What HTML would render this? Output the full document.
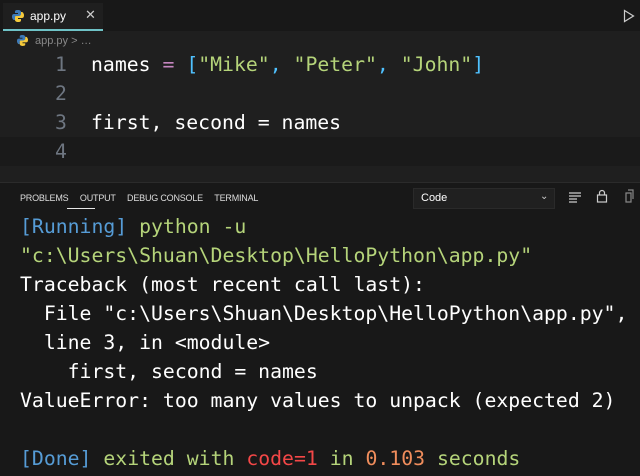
<!DOCTYPE html>
<html><head><meta charset="utf-8"><style>
*{margin:0;padding:0;box-sizing:border-box}
body{width:640px;height:476px;background:#181818;overflow:hidden;position:relative;font-family:"Liberation Sans",sans-serif}
.abs{position:absolute}
.mono{font-family:"DejaVu Sans Mono","Liberation Mono",monospace;font-size:19.8px;white-space:pre}
.code div{height:29px;line-height:29px}
.s{color:#ce9178}
</style></head><body>
<div class="abs" style="left:0;top:0;width:640px;height:3px;background:#181818"></div>
<div class="abs" style="left:0;top:3px;width:640px;height:28px;background:#181818"></div>
<div class="abs" style="left:3px;top:3px;width:100px;height:28px;background:#1f1f1f;border-bottom:2px solid #6fc3c7"></div>
<svg class="abs" style="left:12px;top:10px" width="12" height="12" viewBox="0 0 12 12"><path d="M6 0C3 0 3 1 3 2v1h3v1H2C0 4 0 6 0 7s1 3 2 3h1V8c0-1 1-2 2-2h3c1 0 1-1 1-2V2C9 1 8 0 6 0z" fill="#3d7ab8"/><path d="M6 12c3 0 3-1 3-2V9H6V8h4c2 0 2-2 2-3s-1-3-2-3H9v2c0 1-1 2-2 2H4C3 6 3 7 3 8v2c0 1 1 2 3 2z" fill="#f4c93c"/></svg>
<div class="abs" style="left:30px;top:9px;font-size:12px;color:#fff">app.py</div>
<div class="abs" style="left:85px;top:7px;font-size:13px;color:#ccc">✕</div>
<div class="abs" style="left:0;top:31px;width:640px;height:151px;background:#1f1f1f"></div>
<svg class="abs" style="left:17px;top:35px" width="11" height="11" viewBox="0 0 12 12"><path d="M6 0C3 0 3 1 3 2v1h3v1H2C0 4 0 6 0 7s1 3 2 3h1V8c0-1 1-2 2-2h3c1 0 1-1 1-2V2C9 1 8 0 6 0z" fill="#3d7ab8"/><path d="M6 12c3 0 3-1 3-2V9H6V8h4c2 0 2-2 2-3s-1-3-2-3H9v2c0 1-1 2-2 2H4C3 6 3 7 3 8v2c0 1 1 2 3 2z" fill="#f4c93c"/></svg>
<div class="abs" style="left:35px;top:35px;font-size:11px;color:#888">app.py &gt; …</div>
<svg class="abs" style="left:623px;top:9px" width="12" height="14"><path d="M1.5 1.5L10.5 7L1.5 12.5Z" fill="none" stroke="#ccc" stroke-width="1.2"/></svg>
<div class="abs" style="left:0;top:137px;width:640px;height:29px;background:#1a1a1a"></div>
<div class="abs mono code" style="left:55px;top:50px;color:#6e7681"><div>1</div><div>2</div><div>3</div><div>4</div></div>
<div class="abs mono code" style="left:91px;top:50px;color:#fff"><div>names <span style="color:#c586c0">=</span> <span style="color:#4fc1ff">[</span><span style="color:#b5d47a">"Mike"</span><span style="color:#4fc1ff">,</span> <span style="color:#b5d47a">"Peter"</span><span style="color:#4fc1ff">,</span> <span style="color:#b5d47a">"John"</span><span style="color:#4fc1ff">]</span></div><div> </div><div>first, second = names</div><div> </div></div>
<div class="abs" style="left:0;top:182px;width:640px;height:1px;background:#2b2b2b"></div>
<div class="abs" style="left:20px;top:193px;font-size:9px;color:#ddd;letter-spacing:-0.2px;white-space:pre">PROBLEMS     OUTPUT     DEBUG CONSOLE     TERMINAL</div>
<div class="abs" style="left:67px;top:208px;width:28px;height:1px;background:#e7e7e7"></div>
<div class="abs" style="left:413px;top:188px;width:142px;height:21px;background:#202020;border:1px solid #2a2a2a"></div>
<div class="abs" style="left:421px;top:192px;font-size:11px;color:#fff">Code</div>
<div class="abs" style="left:540px;top:191px;font-size:10px;color:#ccc">⌄</div>
<svg class="abs" style="left:568px;top:191px" width="14" height="12"><path d="M1 2h12M1 5h12M1 8h8M1 11h8" stroke="#ccc" stroke-width="1.2"/></svg>
<svg class="abs" style="left:596px;top:189px" width="12" height="14"><rect x="1.5" y="6" width="9" height="7" fill="none" stroke="#ccc" stroke-width="1.2"/><path d="M3.5 6V4a2.5 2.5 0 0 1 5 0v2" fill="none" stroke="#ccc" stroke-width="1.2"/></svg>
<svg class="abs" style="left:623px;top:189px" width="12" height="14"><path d="M3 4h5v9H3z" fill="none" stroke="#888" stroke-width="1.2"/><path d="M5 1h5v9" fill="none" stroke="#888" stroke-width="1.2"/></svg>
<div class="abs mono code" style="left:20px;top:212px;color:#fff"><div><span style="color:#569cd6">[Running]</span> <span style="color:#b5d47a">python -u</span></div><div style="color:#b5d47a">"c:\Users\Shuan\Desktop\HelloPython\app.py"</div><div>Traceback (most recent call last):</div><div>  File "c:\Users\Shuan\Desktop\HelloPython\app.py",</div><div>  line 3, in &lt;module&gt;</div><div>    first, second = names</div><div>ValueError: too many values to unpack (expected 2)</div><div> </div><div><span style="color:#569cd6">[Done]</span> <span style="color:#b5d47a">exited with</span> <span style="color:#f44747">code=1</span> <span style="color:#b5d47a">in</span> <span style="color:#f08d5c">0.103</span> <span style="color:#b5d47a">seconds</span></div></div>
</body></html>
